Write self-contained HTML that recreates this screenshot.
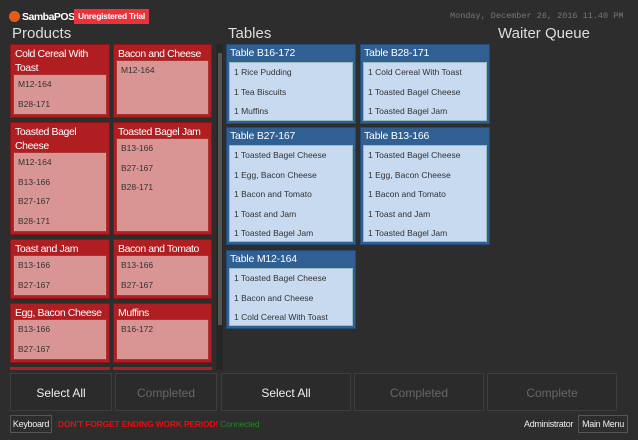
<!DOCTYPE html>
<html><head><meta charset="utf-8"><style>
*{margin:0;padding:0;box-sizing:border-box}
body{width:638px;height:440px;background:#2d2d2d;font-family:"Liberation Sans",sans-serif;position:relative;overflow:hidden;color:#ddd}
.a{position:absolute}
.h{font-size:15px;color:#ddd;font-weight:normal}
.p{position:absolute;background:#b01e22;border:1px solid #8a1518}
.p .t{color:#fff;font-size:10.5px;letter-spacing:-0.4px;padding:2px 0 0 4px;line-height:14px;white-space:nowrap}
.p .b{position:absolute;left:2px;right:2px;bottom:2px;background:#d99494;border:1px solid #a33}
.p .b div{font-size:8.5px;color:#333;height:19.5px;line-height:19.5px;padding-left:4px}
.tb{position:absolute;background:#2f5f93;border:1px solid #234a75}
.tb .t{color:#fff;font-size:10.5px;letter-spacing:-0.2px;height:17px;line-height:16px;padding-left:3px}
.tb .b{position:absolute;left:2px;right:2px;top:17px;bottom:2px;background:#c8daf0;border:1px solid #9bb}
.tb .b div{font-size:8.5px;color:#333;height:19.5px;line-height:19.5px;padding-left:4px}
.btn{position:absolute;top:373px;height:38px;border:1px solid #3e3e3e;background:#2b2b2b;font-size:12px;text-align:center;line-height:38px}
</style></head><body>
<div class="a" style="left:9px;top:11px;width:11px;height:11px;border-radius:50%;background:#e85a18"></div>
<div class="a" style="left:22px;top:11px;font-size:10.5px;font-weight:bold;color:#fff;letter-spacing:-0.5px">SambaPOS</div>
<div class="a" style="left:74px;top:9px;width:75px;height:15px;background:#e8333b;color:#fff;font-size:8.5px;font-weight:bold;line-height:15px;text-align:center;white-space:nowrap;letter-spacing:-0.3px">Unregistered Trial</div>
<div class="a" style="left:450px;top:11px;font-family:'Liberation Mono',monospace;font-size:8.5px;color:#777">Monday, December 26, 2016 11.40 PM</div>
<div class="a h" style="left:12px;top:25px">Products</div>
<div class="a h" style="left:228px;top:25px">Tables</div>
<div class="a h" style="left:498px;top:25px">Waiter Queue</div>

<div class="p" style="left:10px;top:44px;width:100px;height:74px"><div class="t">Cold Cereal With<br>Toast</div><div class="b" style="height:41px"><div>M12-164</div><div>B28-171</div></div></div>
<div class="p" style="left:113px;top:44px;width:99px;height:74px"><div class="t">Bacon and Cheese</div><div class="b" style="height:55px"><div>M12-164</div></div></div>
<div class="p" style="left:10px;top:122px;width:100px;height:113px"><div class="t">Toasted Bagel<br>Cheese</div><div class="b" style="height:80px"><div>M12-164</div><div>B13-166</div><div>B27-167</div><div>B28-171</div></div></div>
<div class="p" style="left:113px;top:122px;width:99px;height:113px"><div class="t">Toasted Bagel Jam</div><div class="b" style="height:94px"><div>B13-166</div><div>B27-167</div><div>B28-171</div></div></div>
<div class="p" style="left:10px;top:239px;width:100px;height:60px"><div class="t">Toast and Jam</div><div class="b" style="height:41px"><div>B13-166</div><div>B27-167</div></div></div>
<div class="p" style="left:113px;top:239px;width:99px;height:60px"><div class="t">Bacon and Tomato</div><div class="b" style="height:41px"><div>B13-166</div><div>B27-167</div></div></div>
<div class="p" style="left:10px;top:303px;width:100px;height:60px"><div class="t">Egg, Bacon Cheese</div><div class="b" style="height:41px"><div>B13-166</div><div>B27-167</div></div></div>
<div class="p" style="left:113px;top:303px;width:99px;height:60px"><div class="t">Muffins</div><div class="b" style="height:41px"><div>B16-172</div></div></div>
<div class="a" style="left:10px;top:367px;width:100px;height:3px;background:#b01e22"></div>
<div class="a" style="left:113px;top:367px;width:99px;height:3px;background:#b01e22"></div>
<div class="a" style="left:216px;top:44px;width:7px;height:326px;background:#262626"></div>
<div class="a" style="left:218px;top:53px;width:4px;height:272px;background:#555"></div>

<div class="tb" style="left:226px;top:44px;width:130px;height:80px"><div class="t">Table B16-172</div><div class="b"><div>1 Rice Pudding</div><div>1 Tea Biscuits</div><div>1 Muffins</div></div></div>
<div class="tb" style="left:360px;top:44px;width:130px;height:80px"><div class="t">Table B28-171</div><div class="b"><div>1 Cold Cereal With Toast</div><div>1 Toasted Bagel Cheese</div><div>1 Toasted Bagel Jam</div></div></div>
<div class="tb" style="left:226px;top:127px;width:130px;height:118px"><div class="t">Table B27-167</div><div class="b"><div>1 Toasted Bagel Cheese</div><div>1 Egg, Bacon Cheese</div><div>1 Bacon and Tomato</div><div>1 Toast and Jam</div><div>1 Toasted Bagel Jam</div></div></div>
<div class="tb" style="left:360px;top:127px;width:130px;height:118px"><div class="t">Table B13-166</div><div class="b"><div>1 Toasted Bagel Cheese</div><div>1 Egg, Bacon Cheese</div><div>1 Bacon and Tomato</div><div>1 Toast and Jam</div><div>1 Toasted Bagel Jam</div></div></div>
<div class="tb" style="left:226px;top:250px;width:130px;height:79px"><div class="t">Table M12-164</div><div class="b"><div>1 Toasted Bagel Cheese</div><div>1 Bacon and Cheese</div><div>1 Cold Cereal With Toast</div></div></div>

<div class="btn" style="left:10px;width:102px;color:#eee">Select All</div>
<div class="btn" style="left:115px;width:102px;color:#666">Completed</div>
<div class="btn" style="left:221px;width:130px;color:#eee">Select All</div>
<div class="btn" style="left:354px;width:130px;color:#666">Completed</div>
<div class="btn" style="left:487px;width:130px;color:#666">Complete</div>

<div class="a" style="left:10px;top:415px;width:42px;height:18px;border:1px solid #555;font-size:9px;line-height:16px;text-align:center;color:#eee;letter-spacing:-0.3px">Keyboard</div>
<div class="a" style="left:58px;top:419px;font-size:8.5px;font-weight:bold;color:#e01010;letter-spacing:-0.2px">DON'T FORGET ENDING WORK PERIOD! <span style="color:#1a8a1a;font-weight:normal">Connected</span></div>
<div class="a" style="left:524px;top:419px;font-size:9px;color:#eee;letter-spacing:-0.3px">Administrator</div>
<div class="a" style="left:578px;top:415px;width:50px;height:18px;border:1px solid #555;font-size:9px;line-height:16px;text-align:center;color:#eee;letter-spacing:-0.3px">Main Menu</div>
</body></html>
